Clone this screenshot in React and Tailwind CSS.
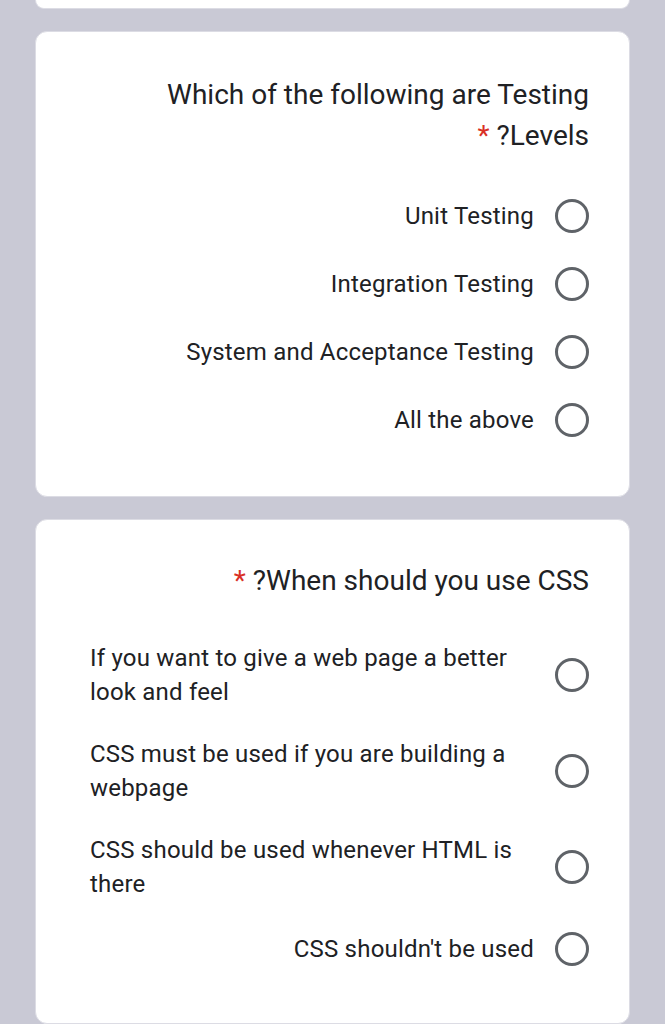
const Radio = () => (
  <div className="h-10 flex items-center shrink-0">
    <span className="block w-[34px] h-[34px] rounded-full border-[3px] border-[#5f6368]"></span>
  </div>
);

const Option = ({ label }) => (
  <div className="flex items-center justify-end gap-[21px] py-[14px]">
    <p className="text-left text-[24px] leading-[34px] tracking-[0.2px] text-[#202124]">{label}</p>
    <Radio />
  </div>
);

const Card = ({ children, className = '' }) => (
  <div className={`bg-white rounded-[12px] border border-[#dcdce4] pl-[54px] pr-[40px] ${className}`}>
    {children}
  </div>
);

const App = () => {
  return (
    <div
      className="min-h-screen bg-[#c9c9d5] px-[35px] flex flex-col gap-[22px]"
      style={{ fontFamily: 'Roboto, "Liberation Sans", sans-serif' }}
    >
      <div className="h-[9px] bg-white rounded-b-[12px] border border-t-0 border-[#dcdce4]"></div>

      <Card className="pt-[42px] pb-[42px]">
        <h2 className="text-right text-[28px] leading-[41px] text-[#202124] mb-[26px]">
          <span className="block">Which of the following are Testing</span>
          <span className="block">
            <span className="text-[#d93025]">*</span> ?Levels
          </span>
        </h2>
        <div>
          <Option label="Unit Testing" />
          <Option label="Integration Testing" />
          <Option label="System and Acceptance Testing" />
          <Option label="All the above" />
        </div>
      </Card>

      <Card className="pt-[40px] pb-[40px]">
        <h2 className="text-right text-[28px] leading-[41px] text-[#202124] mb-[26px]">
          <span className="text-[#d93025]">*</span> ?When should you use CSS
        </h2>
        <div>
          <Option label="If you want to give a web page a better look and feel" />
          <Option label="CSS must be used if you are building a webpage" />
          <Option label="CSS should be used whenever HTML is there" />
          <Option label="CSS shouldn't be used" />
        </div>
      </Card>
    </div>
  );
};

export default App;
